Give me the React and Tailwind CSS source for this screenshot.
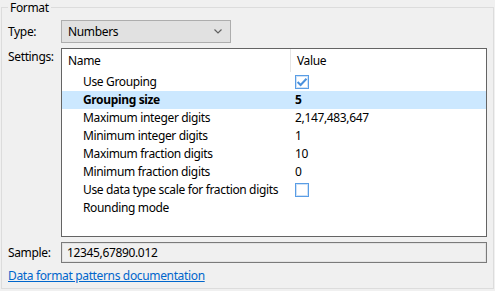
import React from 'react';

const rows = [
  { name: 'Use Grouping', value: { check: true } },
  { name: 'Grouping size', value: '5', selected: true },
  { name: 'Maximum integer digits', value: '2,147,483,647' },
  { name: 'Minimum integer digits', value: '1' },
  { name: 'Maximum fraction digits', value: '10' },
  { name: 'Minimum fraction digits', value: '0' },
  { name: 'Use data type scale for fraction digits', value: { check: false } },
  { name: 'Rounding mode', value: '' },
];

const CheckBox = ({ checked }) => (
  <svg width="14" height="14" viewBox="0 0 14 14" className="block">
    <rect x="0.5" y="0.5" width="13" height="13" fill="#ffffff" stroke="#3c8ce0" strokeOpacity="0.85" />
    <rect x="1.5" y="1.5" width="11" height="11" fill="none" stroke="#cfe2f7" />
    {checked && (
      <path d="M2.6 7 L5.6 10 L11.5 3.8" fill="none" stroke="#4a90dc" strokeWidth="2" />
    )}
  </svg>
);

const App = () => {
  return (
    <div
      className="w-[495px] h-[291px] bg-[#f0f0f0] text-[12px] tracking-[-0.35px] text-black overflow-hidden pt-[7px]"
      style={{ fontFamily: '"Noto Sans", "Open Sans", sans-serif' }}
    >
      <div className="relative ml-[1px] w-[493px] h-[282px] border border-[#dcdcdc]">
        <span className="absolute left-[6px] top-[-8px] px-[2px] bg-[#f0f0f0] leading-[15px]">Format</span>

        <div className="flex items-center pl-[6px] pt-[12px] h-[35px]">
          <span className="w-[53px]">Type:</span>
          <div className="flex items-center justify-between w-[170px] h-[23px] border border-[#adadad] bg-[#e1e1e1] pl-[6px] pr-[8px]">
            <span>Numbers</span>
            <svg width="8" height="5" viewBox="0 0 8 5">
              <path d="M0.5 0.5 L4 4 L7.5 0.5" fill="none" stroke="#606060" strokeWidth="1.2" />
            </svg>
          </div>
        </div>

        <div className="flex pl-[6px] mt-[5px]">
          <span className="w-[53px] leading-[14px] mt-[2px]">Settings:</span>
          <div className="w-[426px] h-[189px] border border-[#646464] bg-white">
            <div className="flex h-[24px] items-center">
              <div className="w-[228px] pl-[6px] h-full flex items-center">Name</div>
              <div className="h-[23px] w-px bg-[#e5e5e5] self-start" />
              <div className="pl-[6px] flex items-center h-full">Value</div>
            </div>
            {rows.map((r) => (
              <div
                key={r.name}
                className={`flex items-center h-[18px] ${r.selected ? 'bg-[#cce8ff] font-bold' : ''}`}
              >
                <div className="w-[233px] pl-[21px] whitespace-nowrap">{r.name}</div>
                <div>
                  {typeof r.value === 'object' ? <CheckBox checked={r.value.check} /> : r.value}
                </div>
              </div>
            ))}
          </div>
        </div>

        <div className="flex items-center pl-[6px] mt-[5px]">
          <span className="w-[53px]">Sample:</span>
          <div className="w-[426px] h-[21px] border border-[#7a7a7a] flex items-center">
            <div className="w-full h-full border border-[#e3e3e3] flex items-center pl-[4px]">12345,67890.012</div>
          </div>
        </div>

        <div className="pl-[6px] mt-[5px] leading-[16px]">
          <span className="text-[#0066cc] underline">Data format patterns documentation</span>
        </div>
      </div>
    </div>
  );
};

export default App;
